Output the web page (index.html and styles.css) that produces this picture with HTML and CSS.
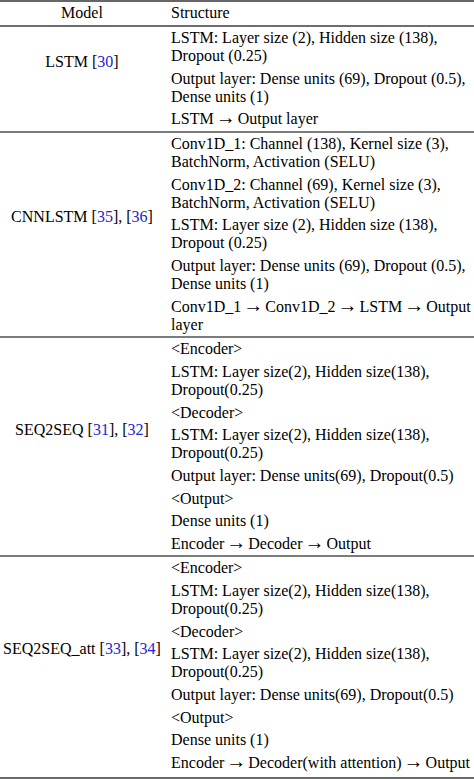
FILE: index.html
```html
<!DOCTYPE html>
<html>
<head>
<meta charset="utf-8">
<link rel="stylesheet" href="styles.css">
</head>
<body>
<div class="table">
  <div class="row head">
    <div class="model"><span>Model</span></div>
    <div class="structure"><p>Structure</p></div>
  </div>
  <div class="row">
    <div class="model"><span class="label">LSTM [<a class="cite">30</a>]</span></div>
    <div class="structure">
      <p>LSTM: Layer size (2), Hidden size (138),<br>Dropout (0.25)</p>
      <p>Output layer: Dense units (69), Dropout (0.5),<br>Dense units (1)</p>
      <p>LSTM <span class="arr">→</span> Output layer</p>
    </div>
  </div>
  <div class="row">
    <div class="model"><span class="label">CNNLSTM [<a class="cite">35</a>], [<a class="cite">36</a>]</span></div>
    <div class="structure">
      <p>Conv1D_1: Channel (138), Kernel size (3),<br>BatchNorm, Activation (SELU)</p>
      <p>Conv1D_2: Channel (69), Kernel size (3),<br>BatchNorm, Activation (SELU)</p>
      <p>LSTM: Layer size (2), Hidden size (138),<br>Dropout (0.25)</p>
      <p>Output layer: Dense units (69), Dropout (0.5),<br>Dense units (1)</p>
      <p>Conv1D_1 <span class="arr">→</span> Conv1D_2 <span class="arr">→</span> LSTM <span class="arr">→</span> Output<br>layer</p>
    </div>
  </div>
  <div class="row">
    <div class="model"><span class="label">SEQ2SEQ [<a class="cite">31</a>], [<a class="cite">32</a>]</span></div>
    <div class="structure">
      <p>&lt;Encoder&gt;</p>
      <p>LSTM: Layer size(2), Hidden size(138),<br>Dropout(0.25)</p>
      <p>&lt;Decoder&gt;</p>
      <p>LSTM: Layer size(2), Hidden size(138),<br>Dropout(0.25)</p>
      <p>Output layer: Dense units(69), Dropout(0.5)</p>
      <p>&lt;Output&gt;</p>
      <p>Dense units (1)</p>
      <p>Encoder <span class="arr">→</span> Decoder <span class="arr">→</span> Output</p>
    </div>
  </div>
  <div class="row">
    <div class="model"><span class="label">SEQ2SEQ_att [<a class="cite">33</a>], [<a class="cite">34</a>]</span></div>
    <div class="structure">
      <p>&lt;Encoder&gt;</p>
      <p>LSTM: Layer size(2), Hidden size(138),<br>Dropout(0.25)</p>
      <p>&lt;Decoder&gt;</p>
      <p>LSTM: Layer size(2), Hidden size(138),<br>Dropout(0.25)</p>
      <p>Output layer: Dense units(69), Dropout(0.5)</p>
      <p>&lt;Output&gt;</p>
      <p>Dense units (1)</p>
      <p>Encoder <span class="arr">→</span> Decoder(with attention) <span class="arr">→</span> Output</p>
    </div>
  </div>
</div>
</body>
</html>
```
FILE: styles.css
```css
html, body {
  margin: 0;
  padding: 0;
  background: #ffffff;
}
body {
  font-family: "Liberation Serif", "Times New Roman", serif;
  font-size: 16px;
  color: #000000;
}
.table {
  width: 474px;
  border-top: 2px solid #666666;
  border-bottom: 3px solid #6a6a6a;
}
.row {
  display: grid;
  grid-template-columns: 164px 1fr;
  border-bottom: 2px solid #7c7c7c;
}
.row:last-child {
  border-bottom: none;
  padding-bottom: 3px;
}
.head {
  border-bottom: 2px solid #6e6e6e;
}
.head p {
  padding: 2px 0;
}
.model {
  display: flex;
  align-items: center;
  justify-content: center;
  line-height: 18px;
  white-space: nowrap;
}
.label {
  margin-bottom: 34px;
}
.cite {
  color: #2323d6;
  text-decoration: none;
}
.structure {
  padding-left: 7px;
}
.structure p {
  margin: 0;
  padding: 2.33px 0;
  line-height: 18px;
  white-space: nowrap;
}
.arr {
  font-family: "Liberation Serif", serif;
  font-size: 20px;
  line-height: 0;
  margin: 0 -2px;
}
```
